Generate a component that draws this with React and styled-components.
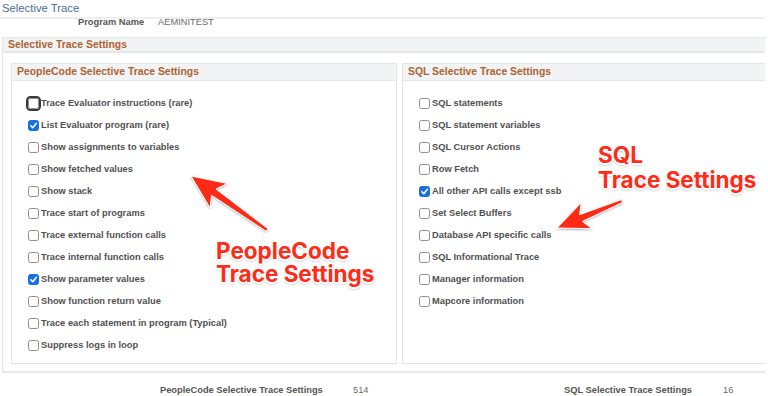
import React from "react";
import styled, { createGlobalStyle } from "styled-components";

const GlobalStyle = createGlobalStyle`
  html, body { margin: 0; padding: 0; background: #fff; }
  body { font-family: "Liberation Sans", Arial, sans-serif; }
  * { box-sizing: border-box; }
`;

const Page = styled.div`
  position: relative;
  width: 765px;
  height: 396px;
  overflow: hidden;
`;

const TitleBar = styled.div`
  height: 19px;
  padding-left: 2px;
  border-bottom: 2px solid #eceef0;
  font-size: 11.3px;
  line-height: 16px;
  color: #4c6b95;
`;

const ProgramRow = styled.div`
  height: 9px;
  overflow: hidden;
  display: flex;
  padding-left: 78px;
`;

const ProgramInner = styled.div`
  display: flex;
  margin-top: -1px;
  line-height: 9px;
  font-size: 9.3px;
`;

const FieldLabel = styled.span`
  font-weight: bold;
  color: #555;
  width: ${(p) => p.$w || "auto"};
`;

const FieldValue = styled.span`
  color: #6a6a6a;
`;

const Outer = styled.section`
  margin: 9px 0 0 2px;
  width: 770px;
  border-left: 1px solid #e4e6e8;
  border-bottom: 2px solid #e8e9eb;
`;

const SectionHeader = styled.div`
  height: 16px;
  background: #f1f3f5;
  border-top: 1px solid #e4e6e8;
  border-bottom: 2px solid #e4e6e8;
  padding-left: ${(p) => p.$pad || "5px"};
  font-size: 10.4px;
  line-height: 13px;
  font-weight: bold;
  color: #ad6331;
  white-space: nowrap;
`;

const OuterBody = styled.div`
  display: grid;
  grid-template-columns: 386px 1fr;
  column-gap: 5px;
  padding: 10px 0 7px 8px;
`;

const Panel = styled.div`
  height: 301px;
  border: 1px solid #e2e3e5;
  border-top: none;
`;

const PanelHeader = styled(SectionHeader)`
  height: 18px;
  line-height: 16px;
  border-top: 1px solid #e4e6e8;
  border-bottom: 1px solid #e4e6e8;
`;

const List = styled.div`
  display: flex;
  flex-direction: column;
  padding: 11px 0 0 16px;
`;

const Row = styled.label`
  display: flex;
  align-items: center;
  height: 22px;
  font-size: 9.3px;
  font-weight: bold;
  color: #505050;
  white-space: nowrap;
`;

const Box = styled.span`
  flex: none;
  width: 11px;
  height: 11px;
  margin-right: 2px;
  border-radius: 2.5px;
  border: 1px solid ${(p) => (p.$checked ? "#1a6fe0" : "#8e8e8e")};
  background: ${(p) => (p.$checked ? "#1a6fe0" : "#fff")};
  display: flex;
  align-items: center;
  justify-content: center;
  outline: ${(p) => (p.$focus ? "2px solid #3a3a3a" : "none")};
  outline-offset: 0px;
`;

const Footer = styled.div`
  display: grid;
  grid-template-columns: 160px 193px 211px 159px auto;
  padding-top: 11px;
  font-size: 9.3px;
  line-height: 12px;
`;

const Annotation = styled.div`
  position: absolute;
  left: ${(p) => p.$x}px;
  top: ${(p) => p.$y}px;
  font-family: Inter, "Liberation Sans", sans-serif;
  font-weight: 700;
  font-size: 22.5px;
  line-height: ${(p) => p.$lh}px;
  color: #fe2c16;
  white-space: pre;
  text-shadow:
    1.5px 0 0 #fff, -1.5px 0 0 #fff, 0 1.5px 0 #fff, 0 -1.5px 0 #fff,
    1px 1px 0 #fff, -1px -1px 0 #fff, 1px -1px 0 #fff, -1px 1px 0 #fff,
    0 1.5px 3px rgba(0, 0, 0, 0.35);
`;

const Overlay = styled.svg`
  position: absolute;
  left: 0;
  top: 0;
  pointer-events: none;
`;

const Check = () => (
  <svg width="9" height="9" viewBox="0 0 10 10">
    <path d="M2 5.3 L4.2 7.4 L8.2 2.6" fill="none" stroke="#fff" strokeWidth="1.8" strokeLinecap="round" strokeLinejoin="round" />
  </svg>
);

const peopleCode = [
  ["Trace Evaluator instructions (rare)", false, true],
  ["List Evaluator program (rare)", true],
  ["Show assignments to variables"],
  ["Show fetched values"],
  ["Show stack"],
  ["Trace start of programs"],
  ["Trace external function calls"],
  ["Trace internal function calls"],
  ["Show parameter values", true],
  ["Show function return value"],
  ["Trace each statement in program (Typical)"],
  ["Suppress logs in loop"],
];

const sql = [
  ["SQL statements"],
  ["SQL statement variables"],
  ["SQL Cursor Actions"],
  ["Row Fetch"],
  ["All other API calls except ssb", true],
  ["Set Select Buffers"],
  ["Database API specific calls"],
  ["SQL Informational Trace"],
  ["Manager information"],
  ["Mapcore information"],
];

const CheckList = ({ items }) => (
  <List>
    {items.map(([text, checked, focus]) => (
      <Row key={text}>
        <Box $checked={checked} $focus={focus}>{checked && <Check />}</Box>
        {text}
      </Row>
    ))}
  </List>
);

function arrowPoints(tip, tail, headLen, headHalf, baseHalf, tailHalf) {
  const dx = tip[0] - tail[0];
  const dy = tip[1] - tail[1];
  const len = Math.hypot(dx, dy);
  const ux = dx / len, uy = dy / len;
  const nx = -uy, ny = ux;
  const bx = tip[0] - ux * headLen, by = tip[1] - uy * headLen;
  const jx = bx + ux * 4, jy = by + uy * 4;
  const pts = [
    tip,
    [bx + nx * headHalf - ux * 2, by + ny * headHalf - uy * 2],
    [jx + nx * baseHalf, jy + ny * baseHalf],
    [tail[0] + nx * tailHalf, tail[1] + ny * tailHalf],
    [tail[0] - nx * tailHalf, tail[1] - ny * tailHalf],
    [jx - nx * baseHalf, jy - ny * baseHalf],
    [bx - nx * headHalf - ux * 2, by - ny * headHalf - uy * 2],
  ];
  return pts.map((p) => p.map((v) => v.toFixed(1)).join(",")).join(" ");
}

export default function App() {
  return (
    <>
      <GlobalStyle />
      <Page>
        <TitleBar>Selective Trace</TitleBar>
        <ProgramRow>
          <ProgramInner>
            <FieldLabel $w="80px">Program Name</FieldLabel>
            <FieldValue>AEMINITEST</FieldValue>
          </ProgramInner>
        </ProgramRow>
        <Outer>
          <SectionHeader>Selective Trace Settings</SectionHeader>
          <OuterBody>
            <Panel>
              <PanelHeader>PeopleCode Selective Trace Settings</PanelHeader>
              <CheckList items={peopleCode} />
            </Panel>
            <Panel>
              <PanelHeader>SQL Selective Trace Settings</PanelHeader>
              <CheckList items={sql} />
            </Panel>
          </OuterBody>
        </Outer>
        <Footer>
          <span />
          <FieldLabel>PeopleCode Selective Trace Settings</FieldLabel>
          <FieldValue>514</FieldValue>
          <FieldLabel>SQL Selective Trace Settings</FieldLabel>
          <FieldValue>16</FieldValue>
        </Footer>

        <Overlay width="765" height="396" viewBox="0 0 765 396">
          <defs>
            <filter id="sh" x="-20%" y="-20%" width="140%" height="140%">
              <feDropShadow dx="0" dy="1" stdDeviation="1.2" floodColor="#000" floodOpacity="0.3" />
            </filter>
          </defs>
          <polygon
            points={arrowPoints([191, 176], [267, 230], 32, 15, 3.8, 1.6)}
            fill="#fe2c16"
            stroke="#fff"
            strokeWidth="1"
            filter="url(#sh)"
          />
          <polygon
            points={arrowPoints([557, 228], [622, 201], 30, 14, 3.6, 1.5)}
            fill="#fe2c16"
            stroke="#fff"
            strokeWidth="1"
            filter="url(#sh)"
          />
        </Overlay>
        <Annotation $x={216} $y={239} $lh={23}>{"PeopleCode\nTrace Settings"}</Annotation>
        <Annotation $x={598} $y={142} $lh={25}>{"SQL\nTrace Settings"}</Annotation>
      </Page>
    </>
  );
}
